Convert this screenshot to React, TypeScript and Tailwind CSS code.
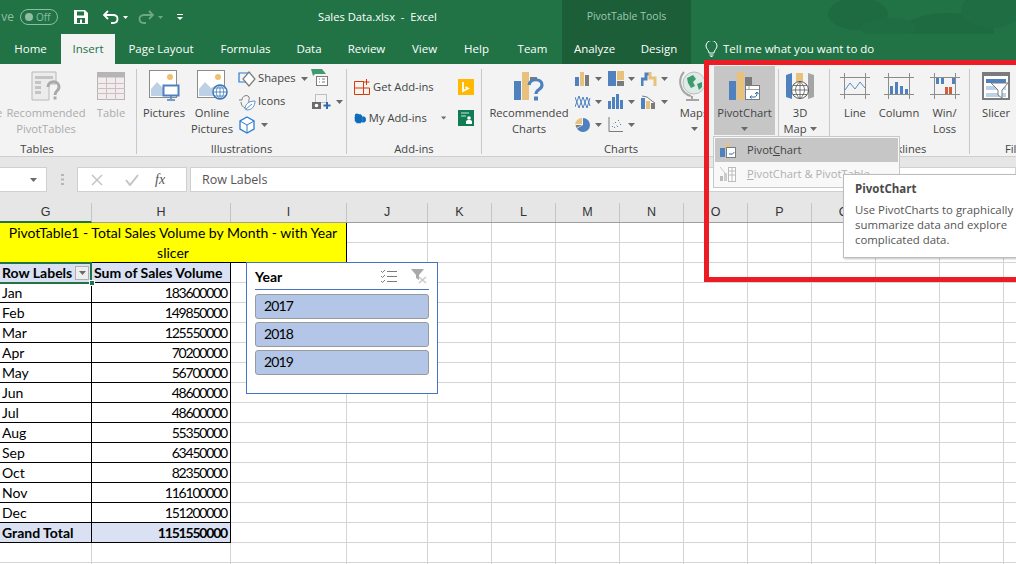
import type { ReactNode } from 'react';

const BLUE = '#4e81bd';
const TAN = '#e8c17c';
const GREY = '#7b7b7b';

const TABS = [
  { label: 'Home', width: 'w-[61px]' },
  { label: 'Insert', width: 'w-[54px] bg-[#f3f3f3] text-[#217346]' },
  { label: 'Page Layout', width: 'w-[92px]' },
  { label: 'Formulas', width: 'w-[77px]' },
  { label: 'Data', width: 'w-[50px]' },
  { label: 'Review', width: 'w-[65px]' },
  { label: 'View', width: 'w-[51px]' },
  { label: 'Help', width: 'w-[53px]' },
  { label: 'Team', width: 'w-[59px]' },
  { label: 'Analyze', width: 'w-[65px] bg-[#1b5e38]' },
  { label: 'Design', width: 'w-[64px] bg-[#1b5e38]' },
];

const MONTHS = [
  ['Jan', '183600000'],
  ['Feb', '149850000'],
  ['Mar', '125550000'],
  ['Apr', '70200000'],
  ['May', '56700000'],
  ['Jun', '48600000'],
  ['Jul', '48600000'],
  ['Aug', '55350000'],
  ['Sep', '63450000'],
  ['Oct', '82350000'],
  ['Nov', '116100000'],
  ['Dec', '151200000'],
];

const COLUMNS = ['G', 'H', 'I', 'J', 'K', 'L', 'M', 'N', 'O', 'P', 'Q', 'R', 'S', 'T'];

function Caret({ className = '' }: { className?: string }) {
  return (
    <svg width="7" height="4" viewBox="0 0 7 4" className={className}>
      <path d="M0 0h7L3.5 4z" fill="#6a6a6a" />
    </svg>
  );
}

function Sep() {
  return <div className="w-px h-[85px] mt-[3px] bg-[#c8c8c8] shrink-0" />;
}

function GroupLabel({ children }: { children: ReactNode }) {
  return <div className="h-[16px] leading-[16px] text-center text-[11.2px] text-[#444]">{children}</div>;
}

function Big({ icon, width, children, muted = false }: { icon: ReactNode; width: string; children: ReactNode; muted?: boolean }) {
  return (
    <div className={`flex flex-col items-center shrink-0 ${width}`}>
      <div className="h-[39px] flex items-center justify-center">{icon}</div>
      <div className={`text-center text-[11.2px] leading-[16px] whitespace-nowrap ${muted ? 'text-[#ababab]' : 'text-[#444]'}`}>
        {children}
      </div>
    </div>
  );
}

function Small({ icon, label, caret = false }: { icon: ReactNode; label?: string; caret?: boolean }) {
  return (
    <div className="h-[23px] flex items-center gap-[2px] text-[11.2px] text-[#444] whitespace-nowrap">
      {icon}
      {label && <span>{label}</span>}
      {caret && <Caret className="ml-[3px]" />}
    </div>
  );
}

function RecommendedPivotIcon() {
  return (
    <svg width="30" height="30" viewBox="0 0 30 30">
      <path d="M1 1h24v12h-7v16H1z" fill="#ececec" stroke="#b9b9b9" />
      <path d="M4 5h18v3H4zM4 10h6v3H4zM4 15h6v3H4zM4 20h6v3H4z" fill="#c4c4c4" />
      <path d="M17 16c0-7 11-7 11 0 0 4-4 3.500-4 8" fill="none" stroke="#a9a9a9" strokeWidth="3" />
      <rect x="22.500" y="25.500" width="3" height="3" fill="#a9a9a9" />
    </svg>
  );
}

function TableIcon() {
  return (
    <svg width="28" height="28" viewBox="0 0 28 28">
      <rect x="0.500" y="0.500" width="27" height="27" fill="#f3ecec" stroke="#b5b5b5" />
      <rect x="0.500" y="0.500" width="27" height="5" fill="#b5b5b5" />
      <path d="M9.500 5v23M18.500 5v23M0 11.500h28M0 16.500h28M0 21.500h28" stroke="#c9bfc4" fill="none" />
    </svg>
  );
}

function FrameBase() {
  return (
    <>
      <rect x="0.500" y="0.500" width="27" height="27" fill="#fff" stroke="#8c8c8c" />
      <circle cx="21" cy="7" r="3" fill="#efc070" />
      <path d="M2 26V19l6-7 6 6 4-2v10z" fill="#bcd0e6" />
    </>
  );
}

function PicturesIcon() {
  return (
    <svg width="31" height="31" viewBox="0 0 31 31">
      <FrameBase />
      <rect x="14.500" y="15.500" width="15" height="10" fill="#fff" stroke={BLUE} strokeWidth="2" />
      <path d="M22 26v3M18 30h8" stroke={BLUE} strokeWidth="1.500" />
    </svg>
  );
}

function OnlinePicturesIcon() {
  return (
    <svg width="31" height="31" viewBox="0 0 31 31">
      <FrameBase />
      <circle cx="23" cy="22" r="7" fill="#fff" stroke="#3c78b5" strokeWidth="1.500" />
      <path d="M16 22h14M23 15v14M17.500 18h11M17.500 26h11M23 15c-5 4-5 10 0 14M23 15c5 4 5 10 0 14" stroke="#3c78b5" fill="none" strokeWidth="0.800" />
    </svg>
  );
}

function ShapesIcon() {
  return (
    <svg width="18" height="17" viewBox="0 0 18 17">
      <path d="M1 3h9v9H1z" fill="none" stroke="#2b7cd3" strokeWidth="1.200" />
      <path d="M11 2l6 7-6 7-6-7z" fill="#fff" stroke={GREY} strokeWidth="1.200" />
    </svg>
  );
}

function IconsIcon() {
  return (
    <svg width="18" height="18" viewBox="0 0 18 18">
      <path d="M1 7h3c0-4 5-6 7-3 1 2-1 3 0 5M3 9c0 3 2 5 4 6" fill="none" stroke={GREY} />
      <path d="M7 16c0-5 4-8 10-8 0 5-3 9-8 9z" fill="#fff" stroke="#5c93c9" />
      <path d="M8 16l6-5" stroke="#5c93c9" />
    </svg>
  );
}

function CubeIcon() {
  return (
    <svg width="18" height="18" viewBox="0 0 18 18">
      <path d="M9 1l7 4v8l-7 4-7-4V5z" fill="#fff" stroke="#2b7cd3" strokeWidth="1.300" />
      <path d="M2 5l7 4 7-4M9 9v8" fill="none" stroke="#2b7cd3" />
    </svg>
  );
}

function StoreIcon() {
  return (
    <svg width="17" height="17" viewBox="0 0 17 17">
      <path d="M0 0h11l4 5H4l-2 2z" fill="#3f9a6e" />
      <rect x="5.500" y="7.500" width="11" height="9" fill="#fff" stroke={GREY} />
      <path d="M8 10h1M8 13h1M11 10h3M11 13h3" stroke={GREY} />
    </svg>
  );
}

function ScreenshotIcon() {
  return (
    <svg width="22" height="16" viewBox="0 0 22 16">
      <rect x="4.500" y="0.500" width="11" height="8" fill="none" stroke="#8a8a8a" strokeDasharray="1 1" />
      <rect x="1" y="8" width="9" height="7" fill="#6a6a6a" />
      <circle cx="5.500" cy="11.500" r="1.800" fill="#fff" />
      <path d="M16 8v7M12.500 11.500h7" stroke="#2b6cb5" strokeWidth="2" />
    </svg>
  );
}

function GetAddinsIcon() {
  return (
    <svg width="16" height="16" viewBox="0 0 16 16">
      <path d="M0.500 2.500h9v13h-9zM0.500 9h15v6.500h-6M9.500 2.500V9" fill="none" stroke="#d83b01" />
      <path d="M12.500 0v6M9.500 3h6" stroke="#d83b01" />
    </svg>
  );
}

function MyAddinsIcon() {
  return (
    <svg width="16" height="16" viewBox="0 0 16 16">
      <path d="M1 7l4-4h4l2 2v8l-2 2H4l-3-3z" fill="#0f6cbd" />
      <circle cx="4" cy="5" r="3" fill="#0f6cbd" />
      <path d="M11 6h3l2 2v4l-2 2h-3z" fill="#0f6cbd" />
    </svg>
  );
}

function BingIcon() {
  return (
    <svg width="16" height="16" viewBox="0 0 16 16">
      <rect width="16" height="16" fill="#ffb900" />
      <path d="M5 3v9l5-2.500L7.500 8" fill="none" stroke="#fff" strokeWidth="1.800" />
    </svg>
  );
}

function PeopleGraphIcon() {
  return (
    <svg width="16" height="16" viewBox="0 0 16 16">
      <rect width="16" height="16" fill="#107c54" />
      <path d="M3 3h8M3 6h5" stroke="#cde6da" />
      <circle cx="11" cy="8" r="1.800" fill="#fff" />
      <path d="M8 14v-2.500c0-1 1-1.500 3-1.500s3 .5 3 1.500V14z" fill="#fff" />
    </svg>
  );
}

function BarsBase() {
  return (
    <>
      <rect x="0" y="10" width="7" height="19" fill={BLUE} />
      <rect x="8" y="1" width="7" height="28" fill={TAN} />
      <rect x="16" y="6" width="7" height="8" fill={GREY} />
    </>
  );
}

function RecommendedChartsIcon() {
  return (
    <svg width="30" height="30" viewBox="0 0 30 30">
      <BarsBase />
      <path d="M15 14c1-7 13-7 13 0 0 5-6 4-6 9" fill="#f3f3f3" stroke={BLUE} strokeWidth="3.200" />
      <rect x="20" y="25.500" width="4" height="4" fill={BLUE} />
    </svg>
  );
}

function PivotChartIcon() {
  return (
    <svg width="31" height="30" viewBox="0 0 31 30">
      <BarsBase />
      <rect x="16.500" y="14.500" width="14" height="14" fill="#fff" stroke="#7b7b7b" />
      <path d="M17 18.500h13M20 15v4" stroke="#a0a0a0" />
      <path d="M21 26h4c2 0 3-1 3-4M26 23l2-2 1.500 2M22.500 24.500L21 26l1.500 1.500" fill="none" stroke="#2b6cb5" />
    </svg>
  );
}

function ThreeDMapIcon() {
  return (
    <svg width="30" height="30" viewBox="0 0 30 30">
      <path d="M1 4l6-2v26l-6-2z" fill={BLUE} />
      <path d="M11 2h7v16h-7z" fill={TAN} />
      <path d="M23 2l6 2v22l-6 2z" fill="#a5a5a5" />
      <circle cx="15" cy="19" r="8.500" fill="#fff" stroke="#595959" />
      <path d="M6.500 19h17M15 10.500v17M8 14.500h14M8 23.500h14M15 10.500c-6 5-6 12 0 17M15 10.500c6 5 6 12 0 17" fill="none" stroke="#595959" strokeWidth="0.800" />
    </svg>
  );
}

function GlobeIcon() {
  return (
    <svg width="30" height="32" viewBox="0 0 30 32">
      <path d="M5 2C-2 10 1 23 12 26" fill="none" stroke="#a5a5a5" strokeWidth="2" />
      <circle cx="15" cy="13" r="11" fill="#dcebe5" stroke="#bdbdbd" />
      <path d="M8 8l6-3 3 4-3 3 2 4-4 2-3-5zM18 14l5-2 0 5-3 3z" fill="#3f9a6e" />
      <path d="M13 26v3M7 30h13" stroke="#a5a5a5" strokeWidth="2" />
    </svg>
  );
}

function MiniChart({ kind }: { kind: number }) {
  const shapes = [
    <>
      <rect x="0" y="6" width="4" height="9" fill={BLUE} />
      <rect x="5" y="1" width="4" height="14" fill={TAN} />
      <rect x="10" y="4" width="4" height="11" fill={GREY} />
    </>,
    <>
      <rect x="0" y="0" width="8" height="15" fill={BLUE} />
      <rect x="9" y="0" width="7" height="9" fill={TAN} />
      <rect x="9" y="10" width="7" height="5" fill={GREY} />
    </>,
    <>
      <path d="M1 15V8h4V3h4" fill="none" stroke={BLUE} strokeWidth="3" />
      <path d="M9 1v6h5v8" fill="none" stroke={TAN} strokeWidth="3" />
    </>,
    <path d="M0 13L4 2l4 12 4-11 3 9M0 3l4 11 4-11 4 11 3-10" fill="none" stroke={BLUE} />,
    <>
      <rect x="0" y="7" width="3" height="8" fill={BLUE} />
      <rect x="4" y="3" width="3" height="12" fill={BLUE} />
      <rect x="8" y="0" width="3" height="15" fill={BLUE} />
      <rect x="12" y="6" width="3" height="9" fill={BLUE} />
    </>,
    <>
      <rect x="0" y="4" width="4" height="11" fill={BLUE} />
      <rect x="5" y="7" width="4" height="8" fill={TAN} />
      <rect x="10" y="9" width="4" height="6" fill={GREY} />
      <path d="M1 2l5 1 5 4 3 2" fill="none" stroke={GREY} />
    </>,
    <>
      <path d="M8 8V1a7 7 0 0 1 0 14 7 7 0 0 1-6-3.500z" fill={BLUE} />
      <path d="M7 7H0a7 7 0 0 1 7-6z" fill={TAN} />
      <path d="M7 8H0.500l1 3z" fill={GREY} />
    </>,
    <>
      <path d="M1 0v14.500h14" fill="none" stroke={GREY} />
      <path d="M4 9h1v1H4zM7 5h1v1H7zM10 3h1v1h-1zM6 10h1v1H6zM12 7h1v1h-1zM9 9h1v1H9z" fill={BLUE} />
      <path d="M5 6h1v1H5zM8 8h1v1H8zM11 5h1v1h-1z" fill={TAN} />
    </>,
  ];
  return (
    <svg width="16" height="16" viewBox="0 0 16 16">
      {shapes[kind]}
    </svg>
  );
}

function SparkFrame({ children }: { children: ReactNode }) {
  return (
    <svg width="30" height="26" viewBox="0 0 30 26">
      <path d="M0 4.500h30M0 21.500h30M4.500 0v26M25.500 0v26" stroke="#8c8c8c" fill="none" />
      {children}
    </svg>
  );
}

function SlicerIcon() {
  return (
    <svg width="28" height="28" viewBox="0 0 28 28">
      <rect x="1" y="1" width="26" height="26" fill="#fff" stroke={GREY} strokeWidth="2" />
      <rect x="1" y="1" width="26" height="3" fill={GREY} />
      <rect x="4" y="7" width="20" height="4" fill={BLUE} />
      <rect x="4" y="14" width="20" height="4" fill="#bcd0e6" />
      <rect x="4" y="21" width="20" height="4" fill="#bcd0e6" />
      <path d="M9 11h17l-6 7v8l-4-3v-5z" fill="#fff" stroke={GREY} />
    </svg>
  );
}

function TitleBar() {
  return (
    <div className="h-[34px] flex items-center bg-[#217346] text-white relative overflow-hidden">
      <svg width="190" height="34" viewBox="0 0 190 34" className="absolute right-0 top-0">
        <ellipse cx="32" cy="14" rx="30" ry="16" fill="#1e6a41" />
        <ellipse cx="122" cy="32" rx="46" ry="19" fill="#1e6a41" />
        <ellipse cx="62" cy="28" rx="28" ry="10" fill="#1f6d42" />
        <ellipse cx="165" cy="10" rx="30" ry="18" fill="#1f6d42" />
      </svg>
      <span className="w-[14px] overflow-hidden text-[12px] text-[#8fbda2] text-right shrink-0">ve</span>
      <div className="ml-[6px] w-[38px] h-[16px] rounded-full border border-[#8fbda2] flex items-center gap-[3px] px-[4px] text-[10px] text-[#8fbda2] shrink-0">
        <span className="w-[8px] h-[8px] rounded-full bg-[#8fbda2]" />
        Off
      </div>
      <svg width="14" height="14" viewBox="0 0 14 14" className="ml-[16px] shrink-0">
        <path d="M0 0h11l3 3v11H0z" fill="#fff" />
        <rect x="3" y="1.500" width="7" height="4" fill="#217346" />
        <rect x="3" y="8" width="8" height="5" fill="#217346" />
        <rect x="6" y="9.500" width="2" height="3.500" fill="#fff" />
      </svg>
      <svg width="16" height="14" viewBox="0 0 16 14" className="ml-[15px] shrink-0">
        <path d="M5 1L1 5l4 4" fill="none" stroke="#fff" strokeWidth="1.800" />
        <path d="M1.500 5H10c6 0 6 8 0 8H8" fill="none" stroke="#fff" strokeWidth="1.800" />
      </svg>
      <svg width="5" height="3" viewBox="0 0 5 3" className="ml-[4px] shrink-0">
        <path d="M0 0h5L2.500 3z" fill="#fff" />
      </svg>
      <svg width="16" height="14" viewBox="0 0 16 14" className="ml-[10px] shrink-0">
        <path d="M11 1l4 4-4 4" fill="none" stroke="#6fa686" strokeWidth="1.800" />
        <path d="M14.500 5H6c-6 0-6 8 0 8h2" fill="none" stroke="#6fa686" strokeWidth="1.800" />
      </svg>
      <svg width="5" height="3" viewBox="0 0 5 3" className="ml-[4px] shrink-0">
        <path d="M0 0h5L2.500 3z" fill="#6fa686" />
      </svg>
      <svg width="6" height="6" viewBox="0 0 6 6" className="ml-[14px] shrink-0">
        <path d="M0 0.500h6" stroke="#fff" />
        <path d="M0 3h6L3 6z" fill="#fff" />
      </svg>
      <div className="ml-[135px] w-[117px] text-[11.2px] whitespace-pre text-center shrink-0">Sales Data.xlsx  -  Excel</div>
      <div className="ml-[127px] w-[129px] h-full bg-[#1b5e38] text-[#9fc9b0] text-[10.5px] flex items-center justify-center shrink-0 relative">
        PivotTable Tools
      </div>
    </div>
  );
}

function TabRow() {
  return (
    <div className="h-[30px] flex bg-[#217346] text-white text-[11.5px] leading-[30px] relative">
      {TABS.map((tab) => (
        <div key={tab.label} className={`text-center shrink-0 ${tab.width}`}>
          {tab.label}
        </div>
      ))}
      <div className="flex items-center gap-[5px] pl-[14px] whitespace-nowrap">
        <svg width="13" height="16" viewBox="0 0 13 16">
          <path d="M4 12c0-3-3-4-3-7a5.500 5.500 0 0 1 11 0c0 3-3 4-3 7zM4.500 14h4M5.500 15.500h2" fill="none" stroke="#fff" />
        </svg>
        Tell me what you want to do
      </div>
    </div>
  );
}

function Ribbon() {
  return (
    <div className="h-[93px] flex bg-[#f3f3f3] border-b border-[#cfcfcf] pt-[2px] overflow-hidden relative">
      {/* Tables */}
      <div className="w-[136px] shrink-0 flex flex-col h-[91px]">
        <div className="flex-1 flex">
          <span className="w-[6px] mt-[39px] text-[11.2px] leading-[16px] text-[#ababab] overflow-hidden -ml-[4px] shrink-0">e</span>
          <Big width="w-[88px]" muted icon={<RecommendedPivotIcon />}>
            Recommended
            <br />
            PivotTables
          </Big>
          <Big width="w-[40px] ml-[1px]" muted icon={<TableIcon />}>
            Table
          </Big>
        </div>
        <div className="pr-[62px]">
          <GroupLabel>Tables</GroupLabel>
        </div>
      </div>
      <Sep />
      {/* Illustrations */}
      <div className="w-[209px] shrink-0 flex flex-col h-[91px]">
        <div className="flex-1 flex pl-[4px]">
          <Big width="w-[46px]" icon={<PicturesIcon />}>
            Pictures
          </Big>
          <Big width="w-[50px]" icon={<OnlinePicturesIcon />}>
            Online
            <br />
            Pictures
          </Big>
          <div className="w-[73px] pt-[1px] ml-[1px] shrink-0">
            <Small icon={<ShapesIcon />} label="Shapes" caret />
            <Small icon={<IconsIcon />} label="Icons" />
            <Small icon={<CubeIcon />} caret />
          </div>
          <div className="pt-[3px]">
            <StoreIcon />
            <div className="flex items-center gap-[3px] mt-[8px]">
              <ScreenshotIcon />
              <Caret />
            </div>
          </div>
        </div>
        <GroupLabel>Illustrations</GroupLabel>
      </div>
      <Sep />
      {/* Add-ins */}
      <div className="w-[134px] shrink-0 flex flex-col h-[91px]">
        <div className="flex-1 flex pl-[7px] pt-[13px] gap-[12px]">
          <div className="flex flex-col gap-[15px] w-[92px] text-[11.2px] text-[#444] whitespace-nowrap">
            <div className="h-[16px] flex items-center gap-[3px]">
              <GetAddinsIcon />
              Get Add-ins
            </div>
            <div className="h-[16px] flex items-center gap-[3px]">
              <MyAddinsIcon />
              My Add-ins
              <Caret className="ml-[11px]" />
            </div>
          </div>
          <div className="flex flex-col gap-[15px]">
            <BingIcon />
            <PeopleGraphIcon />
          </div>
        </div>
        <GroupLabel>Add-ins</GroupLabel>
      </div>
      <Sep />
      {/* Charts */}
      <div className="w-[296px] shrink-0 flex flex-col h-[91px]">
        <div className="flex-1 flex">
          <Big width="w-[90px] ml-[2px]" icon={<RecommendedChartsIcon />}>
            Recommended
            <br />
            Charts
          </Big>
          <div className="grid grid-cols-[33px_33px_33px] grid-rows-[23px_23px_23px] ml-[1px] pt-[1px] shrink-0">
            {[0, 1, 2, 3, 4, 5, 6, 7].map((kind) => (
              <div key={kind} className="flex items-center gap-[4px]">
                <MiniChart kind={kind} />
                <Caret />
              </div>
            ))}
          </div>
          <Big width="w-[42px] ml-[-1px]" icon={<GlobeIcon />}>
            Maps
            <br />
            <Caret className="inline-block mb-[3px]" />
          </Big>
          <div className="ml-[-1px] w-[61px] h-[69px] bg-[#c6c6c6] shrink-0">
            <Big width="w-[61px]" icon={<PivotChartIcon />}>
              PivotChart
              <br />
              <Caret className="inline-block mb-[3px]" />
            </Big>
          </div>
        </div>
        <div className="pr-[18px]">
          <GroupLabel>Charts</GroupLabel>
        </div>
      </div>
      <Sep />
      {/* Tours */}
      <div className="w-[50px] shrink-0 flex flex-col h-[91px]">
        <div className="flex-1">
          <Big width="w-[44px] ml-[-1px]" icon={<ThreeDMapIcon />}>
            3D
            <br />
            Map <Caret className="inline-block mb-[2px]" />
          </Big>
        </div>
        <GroupLabel>Tours</GroupLabel>
      </div>
      <Sep />
      {/* Sparklines */}
      <div className="w-[139px] shrink-0 flex flex-col h-[91px]">
        <div className="flex-1 flex pl-[5px]">
          <Big width="w-[40px]" icon={<SparkFrame><path d="M5 17l5-7 5 6 5-7 5 6" fill="none" stroke="#5a8dc4" /></SparkFrame>}>
            Line
          </Big>
          <Big width="w-[48px]" icon={<SparkFrame><path d="M6 13h3v8H6zM11 9h3v12h-3zM16 13h3v8h-3zM21 16h3v5h-3z" fill={BLUE} /></SparkFrame>}>
            Column
          </Big>
          <Big width="w-[43px]" icon={<SparkFrame><path d="M6 5h3v6H6zM11 5h3v6h-3zM22 5h3v6h-3z" fill={BLUE} /><path d="M15 14h3v7h-3zM19 14h3v7h-3z" fill="#d0603a" /></SparkFrame>}>
            Win/
            <br />
            Loss
          </Big>
        </div>
        <GroupLabel>Sparklines</GroupLabel>
      </div>
      <Sep />
      {/* Filters */}
      <div className="w-[120px] shrink-0 flex flex-col h-[91px]">
        <div className="flex-1">
          <Big width="w-[52px]" icon={<SlicerIcon />}>
            Slicer
          </Big>
        </div>
        <div className="pl-[35px] text-left">
          <div className="h-[16px] leading-[16px] text-[11.2px] text-[#444]">Filters</div>
        </div>
      </div>
    </div>
  );
}

function FormulaBar() {
  return (
    <div className="h-[46px] flex items-start pt-[10px] bg-[#e6e6e6]">
      <div className="w-[47px] h-[25px] bg-white border border-[#d0d0d0] border-l-0 flex items-center justify-end pr-[9px] shrink-0">
        <Caret />
      </div>
      <div className="w-[30px] h-[25px] flex items-center justify-center shrink-0">
        <svg width="3" height="11" viewBox="0 0 3 11">
          <path d="M0 0h3v2H0zM0 4.500h3v2H0zM0 9h3v2H0z" fill="#b5b5b5" />
        </svg>
      </div>
      <div className="w-[110px] h-[25px] bg-white border border-[#d0d0d0] flex items-center shrink-0">
        <svg width="12" height="12" viewBox="0 0 12 12" className="ml-[13px]">
          <path d="M1 1l10 10M11 1L1 11" stroke="#c4c4c4" strokeWidth="1.500" />
        </svg>
        <svg width="14" height="12" viewBox="0 0 14 12" className="ml-[22px]">
          <path d="M1 6l4 5 8-10" fill="none" stroke="#c4c4c4" strokeWidth="2" />
        </svg>
        <span className="ml-[16px] text-[14px] italic text-[#555] font-['Liberation_Serif',serif]">fx</span>
      </div>
      <div className="ml-[3px] flex-1 h-[25px] bg-white border border-[#d0d0d0] flex items-center pl-[11px] pt-[1px] text-[12.5px] text-[#555]">
        Row Labels
      </div>
    </div>
  );
}

function ColumnHeaders() {
  return (
    <div className="h-[20px] grid grid-cols-[92px_139px_116px_81px_repeat(10,64px)] bg-[#e6e6e6] border-b border-[#9e9e9e] text-[12.500px] text-[#333] leading-[19px] font-['Liberation_Sans',sans-serif]">
      {COLUMNS.map((col, index) => (
        <div
          key={col}
          className={index === 0 ? 'text-center border-r border-[#c4c4c4] border-b-2 border-b-[#217346] h-[20px]' : 'text-center border-r border-[#c4c4c4] h-[19px]'}
        >
          {col}
        </div>
      ))}
    </div>
  );
}

function Blank({ count }: { count: number }) {
  return (
    <>
      {Array.from({ length: count }).map((_, i) => (
        <div key={i} className="border-r border-b border-[#d4d4d4]" />
      ))}
    </>
  );
}

function Sheet() {
  return (
    <div className="grid grid-cols-[92px_139px_116px_81px_repeat(10,64px)] auto-rows-[20px] bg-white font-['Lato',sans-serif] text-[14px] text-black leading-[19px]">
      <div className="col-span-3 row-span-2 bg-[#ffff00] border-r border-b border-black text-center whitespace-nowrap leading-[20px] overflow-hidden">
        PivotTable1 - Total Sales Volume by Month - with Year
        <br />
        slicer
      </div>
      <Blank count={22} />

      <div className="bg-[#d9e1f2] border-r border-b border-black font-bold pl-[2px] flex justify-between whitespace-nowrap">
        Row Labels
        <div className="w-[14px] h-[14px] mt-[3px] mr-[2px] bg-[#eeeeee] border border-[#b0b0b0] flex items-center justify-center shrink-0">
          <Caret />
        </div>
      </div>
      <div className="bg-[#d9e1f2] border-r border-b border-black font-bold pl-[2px] whitespace-nowrap">Sum of Sales Volume</div>
      <Blank count={12} />

      {MONTHS.map(([month, value]) => (
        <div key={month} className="contents">
          <div className="border-r border-b border-black pl-[2px]">{month}</div>
          <div className="border-r border-b border-black text-right pr-[3px] tracking-[-1.2px]">{value}</div>
          <Blank count={12} />
        </div>
      ))}

      <div className="bg-[#d9e1f2] border-r border-b border-black font-bold pl-[2px]">Grand Total</div>
      <div className="bg-[#d9e1f2] border-r border-b border-black font-bold text-right pr-[3px] tracking-[-1.2px]">1151550000</div>
      <Blank count={12} />
      <Blank count={28} />
    </div>
  );
}

function Slicer() {
  return (
    <div className="absolute left-[246px] top-[262px] w-[192px] h-[132px] bg-white border border-[#4472c4] font-['Lato',sans-serif] text-black px-[8px]">
      <div className="h-[27px] flex items-center justify-between border-b border-[#4472c4] font-bold text-[14px]">
        Year
        <div className="flex items-center gap-[14px] pr-[2px]">
          <svg width="17" height="15" viewBox="0 0 17 15">
            <path d="M1 2l1.500 1.500L5 1M1 7l1.500 1.500L5 6M1 12l1.500 1.500L5 11" fill="none" stroke="#7b7b7b" />
            <path d="M7 2.500h10M7 7.500h10M7 12.500h10" stroke="#7b7b7b" />
          </svg>
          <svg width="16" height="16" viewBox="0 0 16 16">
            <path d="M0 1h13L8 7v5L5 10V7z" fill="#a8a8a8" />
            <path d="M8 9l7 6M15 9l-7 6" stroke="#c8c8c8" strokeWidth="1.500" />
          </svg>
        </div>
      </div>
      <div className="flex flex-col gap-[3px] pt-[4px]">
        {['2017', '2018', '2019'].map((year) => (
          <div key={year} className="h-[25px] rounded-[3px] bg-[#b4c6e7] border border-[#9a9a9a] pl-[8px] text-[14px] leading-[22px] tracking-[-0.9px]">
            {year}
          </div>
        ))}
      </div>
    </div>
  );
}

function PivotMenu() {
  return (
    <div className="absolute left-[713px] top-[136px] w-[187px] h-[52px] bg-[#f8f8f8] border border-[#c8c8c8] p-px text-[11.2px]">
      <div className="h-[24px] flex items-center bg-[#c6c6c6] text-[#444]">
        <svg width="16" height="16" viewBox="0 0 16 16" className="ml-[5px]">
          <rect x="0" y="6" width="5" height="9" fill={BLUE} />
          <rect x="5" y="1" width="4" height="4" fill={TAN} />
          <rect x="6.500" y="5.500" width="9" height="10" fill="#fff" stroke={GREY} />
          <path d="M9 12h3c1 0 2-1 2-2" fill="none" stroke="#2b6cb5" />
        </svg>
        <span className="ml-[11px]">
          Pivot<span className="underline">C</span>hart
        </span>
      </div>
      <div className="h-[24px] flex items-center text-[#b0b0b0] whitespace-nowrap">
        <svg width="16" height="16" viewBox="0 0 16 16" className="ml-[5px]">
          <path d="M0 1l5 6" stroke="#c8c8c8" />
          <rect x="0" y="10" width="3" height="5" fill="#bbb" />
          <rect x="4" y="7" width="3" height="8" fill="#ccc" />
          <rect x="8.500" y="1.500" width="7" height="14" fill="#fff" stroke="#bbb" />
          <path d="M8 5h8M8 9h8M12 1v14" stroke="#bbb" />
        </svg>
        <span className="ml-[11px]">
          <span className="underline">P</span>ivotChart &amp; PivotTable
        </span>
      </div>
    </div>
  );
}

function Tooltip() {
  return (
    <div className="absolute left-[843px] top-[174px] w-[200px] h-[84px] bg-white border border-[#bdbdbd] shadow-[1px_1px_2px_rgba(0,0,0,0.25)] pl-[11px] pt-[6px] text-[11.4px] text-[#555] leading-[15px] whitespace-nowrap">
      <div className="font-bold text-[11.5px] text-[#4a4a4a] leading-[16px] mb-[5px]">PivotChart</div>
      Use PivotCharts to graphically
      <br />
      summarize data and explore
      <br />
      complicated data.
    </div>
  );
}

export default function App() {
  return (
    <div className="w-[1016px] h-[564px] overflow-hidden relative bg-white font-['Open_Sans',sans-serif]">
      <TitleBar />
      <TabRow />
      <Ribbon />
      <FormulaBar />
      <ColumnHeaders />
      <Sheet />

      {/* active cell */}
      <div className="absolute left-[-3px] top-[262px] w-[95px] h-[22px] border-2 border-[#217346]" />
      <div className="absolute left-[89px] top-[280px] w-[6px] h-[6px] bg-[#217346] border border-white" />

      <Slicer />
      <PivotMenu />
      <Tooltip />

      {/* red callout */}
      <div className="absolute left-[704px] top-[60px] w-[330px] h-[222px] border-[5px] border-[#ed1c24]" />
    </div>
  );
}
